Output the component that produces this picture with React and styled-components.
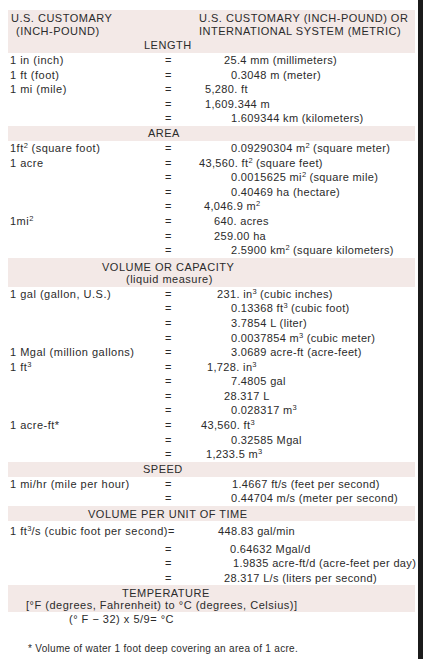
import React from "react";
import styled, { createGlobalStyle } from "styled-components";

const GlobalStyle = createGlobalStyle`
  html, body {
    margin: 0;
    padding: 0;
    background: #ffffff;
  }
  body {
    font-family: "Liberation Sans", Arial, sans-serif;
    color: #2b2b2b;
  }
`;

const Page = styled.div`
  display: flex;
  width: 423px;
  height: 659px;
  overflow: hidden;
`;

const Sheet = styled.div`
  width: 407px;
  margin-left: 8px;
  padding-top: 10px;
  font-size: 11px;
  letter-spacing: 0.5px;
`;

const Edge = styled.div`
  width: 5px;
  margin-left: 3px;
  height: 100%;
  background: #1b1b1b;
`;

const Band = styled.div`
  background: #f3e9e7;
  padding: ${(p) => p.$pad || "0"};
`;

const BandLine = styled.div`
  line-height: ${(p) => p.$lh || 14}px;
  padding-left: ${(p) => p.$x}px;
  white-space: nowrap;
`;

const HeadGrid = styled.div`
  display: grid;
  grid-template-columns: 191px 1fr;
  line-height: 13px;
`;

const HeadCell = styled.div`
  padding-left: ${(p) => p.$x || 0}px;
  white-space: nowrap;
`;

const Row = styled.div`
  display: flex;
  height: ${(p) => p.$h}px;
  line-height: 14.6px;
  padding-left: 2px;
  padding-top: ${(p) => p.$top || 0}px;
  white-space: nowrap;
`;

const Left = styled.div`
  flex: 0 0 auto;
  min-width: 155px;
`;

const Eq = styled.div`
  width: 10px;
  flex-shrink: 0;
`;

const Value = styled.div`
  padding-left: ${(p) => p.$x}px;
  letter-spacing: 0.35px;
`;

const Sup = styled.sup`
  font-size: 7.5px;
  line-height: 0;
  vertical-align: 4px;
  letter-spacing: 0;
`;

const Formula = styled.div`
  padding-left: 61px;
  line-height: 14px;
`;

const Note = styled.div`
  padding-left: 20px;
  margin-top: 17px;
  font-size: 10px;
  line-height: 12px;
  letter-spacing: 0.3px;
`;

const s2 = <Sup>2</Sup>;
const s3 = <Sup>3</Sup>;
const ROW = 14.6;

const sections = [
  {
    rows: [
      ["1 in (inch)", "25.4 mm (millimeters)", 49],
      ["1 ft (foot)", "0.3048 m (meter)", 56],
      ["1 mi (mile)", "5,280. ft", 30],
      ["", "1,609.344 m", 30],
      ["", "1.609344 km (kilometers)", 56],
    ],
  },
  {
    title: [["AREA", 140]],
    rows: [
      [<>1ft{s2} (square foot)</>, <>0.09290304 m{s2} (square meter)</>, 56],
      ["1 acre", <>43,560. ft{s2} (square feet)</>, 24],
      ["", <>0.0015625 mi{s2} (square mile)</>, 56],
      ["", "0.40469 ha (hectare)", 56],
      ["", <>4,046.9 m{s2}</>, 29],
      [<>1mi{s2}</>, "640. acres", 39],
      ["", "259.00 ha", 39],
      ["", <>2.5900 km{s2} (square kilometers)</>, 56],
    ],
  },
  {
    title: [
      ["VOLUME OR CAPACITY", 94],
      ["(liquid measure)", 118],
    ],
    rows: [
      ["1 gal (gallon, U.S.)", <>231. in{s3} (cubic inches)</>, 42],
      ["", <>0.13368 ft{s3} (cubic foot)</>, 56],
      ["", "3.7854 L (liter)", 56],
      ["", <>0.0037854 m{s3} (cubic meter)</>, 56],
      ["1 Mgal (million gallons)", "3.0689 acre-ft (acre-feet)", 56],
      [<>1 ft{s3}</>, <>1,728. in{s3}</>, 32],
      ["", "7.4805 gal", 56],
      ["", "28.317 L", 49],
      ["", <>0.028317 m{s3}</>, 56],
      ["1 acre-ft*", <>43,560. ft{s3}</>, 26],
      ["", "0.32585 Mgal", 56],
      ["", <>1,233.5 m{s3}</>, 31],
    ],
  },
  {
    title: [["SPEED", 135]],
    rows: [
      ["1 mi/hr (mile per hour)", "1.4667 ft/s (feet per second)", 57],
      ["", "0.44704 m/s (meter per second)", 56],
    ],
  },
  {
    title: [["VOLUME PER UNIT OF TIME", 80]],
    rows: [
      [<>1 ft{s3}/s (cubic foot per second)</>, "448.83 gal/min", 40, 3],
      ["", "0.64632 Mgal/d", 55],
      ["", "1.9835 acre-ft/d (acre-feet per day)", 58],
      ["", "28.317 L/s (liters per second)", 49],
    ],
  },
];

function Rows({ rows }) {
  return rows.map(([left, value, x, top], i) => (
    <Row key={i} $top={top} $h={ROW + (top || 0)}>
      <Left>{left}</Left>
      <Eq>=</Eq>
      <Value $x={x}>{value}</Value>
    </Row>
  ));
}

export default function App() {
  return (
    <>
      <GlobalStyle />
      <Page>
        <Sheet>
          <Band $pad="2px 0 1px 0">
            <HeadGrid>
              <div>
                <HeadCell $x={3}>U.S. CUSTOMARY</HeadCell>
                <HeadCell $x={8}>(INCH-POUND)</HeadCell>
              </div>
              <div>
                <HeadCell>U.S. CUSTOMARY (INCH-POUND) OR</HeadCell>
                <HeadCell>INTERNATIONAL SYSTEM (METRIC)</HeadCell>
              </div>
            </HeadGrid>
            <BandLine $x={136} $lh={14}>
              LENGTH
            </BandLine>
          </Band>
          {sections.map((sec, i) => (
            <React.Fragment key={i}>
              {sec.title && (
                <Band $pad={sec.title.length > 1 ? "3px 0 2px 0" : "0.5px 0"}>
                  {sec.title.map(([t, x]) => (
                    <BandLine key={t} $x={x} $lh={sec.title.length > 1 ? 12 : 14}>
                      {t}
                    </BandLine>
                  ))}
                </Band>
              )}
              <Rows rows={sec.rows} />
            </React.Fragment>
          ))}
          <Band $pad="3px 0 1px 0">
            <BandLine $x={114} $lh={11}>
              TEMPERATURE
            </BandLine>
            <BandLine $x={18} $lh={12}>
              [°F (degrees, Fahrenheit) to °C (degrees, Celsius)]
            </BandLine>
          </Band>
          <Formula>(° F − 32) x 5/9= °C</Formula>
          <Note>* Volume of water 1 foot deep covering an area of 1 acre.</Note>
        </Sheet>
        <Edge />
      </Page>
    </>
  );
}
